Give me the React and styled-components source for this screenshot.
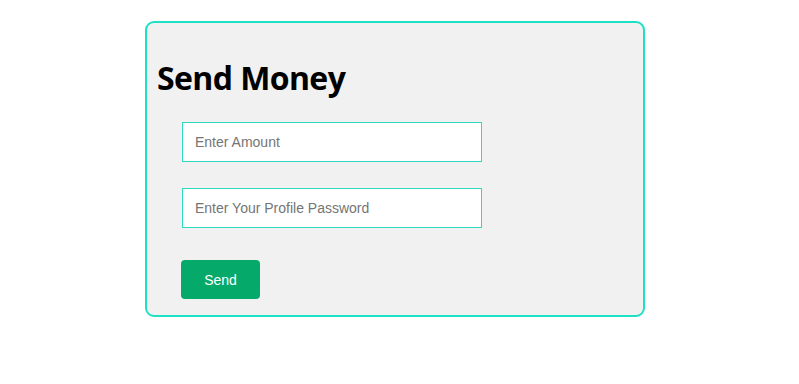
import React from 'react';
import styled, { createGlobalStyle } from 'styled-components';

const GlobalStyle = createGlobalStyle`
  body {
    margin: 0;
    background: #ffffff;
    font-family: "Liberation Sans", Arial, sans-serif;
  }
`;

const Page = styled.div`
  padding: 21px 0 0 145px;
`;

const Card = styled.form`
  box-sizing: border-box;
  width: 500px;
  height: 296px;
  padding: 30px 10px 0;
  background: #f1f1f1;
  border: 2px solid #1de1c4;
  border-radius: 9px;
  display: flex;
  flex-direction: column;
`;

const Title = styled.h1`
  margin: 0 0 19px;
  font-family: "Open Sans", sans-serif;
  font-size: 32px;
  font-weight: 700;
  line-height: 50px;
  letter-spacing: -0.6px;
  color: #000;
`;

const Fields = styled.div`
  display: flex;
  flex-direction: column;
  gap: 26px;
  padding-left: 25px;
`;

const Input = styled.input`
  box-sizing: border-box;
  width: 300px;
  height: 40px;
  padding: 0 12px;
  border: 1px solid #2ed8bd;
  background: #fff;
  font-family: "Liberation Sans", Arial, sans-serif;
  font-size: 14px;
  outline: none;

  &::placeholder {
    color: #757575;
  }
`;

const Button = styled.button`
  margin: 32px 0 0 24px;
  width: 79px;
  height: 39px;
  border: none;
  border-radius: 4px;
  background: #05aa6b;
  color: #fff;
  font-family: "Liberation Sans", Arial, sans-serif;
  font-size: 14px;
  cursor: pointer;
`;

export default function App() {
  return (
    <>
      <GlobalStyle />
      <Page>
        <Card onSubmit={(e) => e.preventDefault()}>
          <Title>Send Money</Title>
          <Fields>
            <Input type="number" placeholder="Enter Amount" />
            <Input type="password" placeholder="Enter Your Profile Password" />
          </Fields>
          <Button type="submit">Send</Button>
        </Card>
      </Page>
    </>
  );
}
